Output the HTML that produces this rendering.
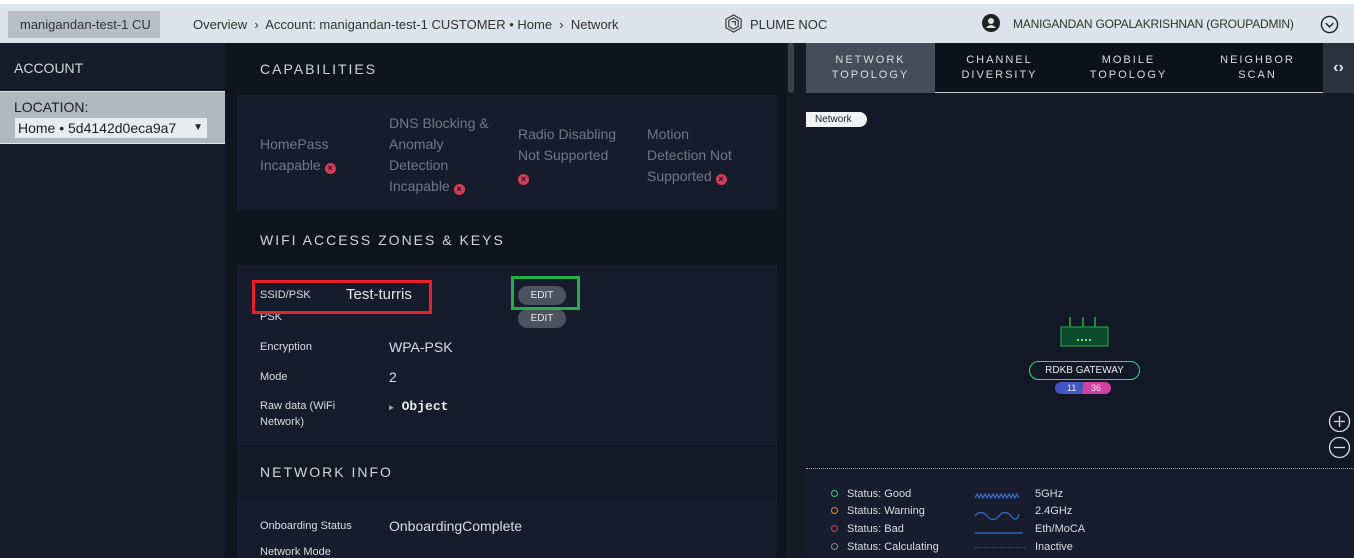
<!DOCTYPE html>
<html style="width:1354px;height:558px;overflow:hidden"><head><style>
*{margin:0;padding:0;box-sizing:border-box}
body{width:1354px;height:558px;overflow:hidden;background:#11151f;font-family:"Liberation Sans",sans-serif;position:relative;color:#c9ced6}
.a{position:absolute}
.top{left:0;top:0;width:1354px;height:43px;background:#dce3ea;border-top:4px solid #fff}
.t{font-size:13px;color:#333}
.side{left:0;top:43px;width:225px;height:515px;background:#171c2b}
.mid{left:225px;top:43px;width:561px;height:515px;background:#10141e}
.card{background:#161c2b}
.h{font-size:14px;letter-spacing:2px;color:#d0d4da}
.cap{font-size:14px;color:#6f7684;line-height:21px}
.x{display:inline-block;width:11px;height:11px;border-radius:50%;background:#d33b57;color:#161c2b;font-size:9px;line-height:11px;text-align:center;font-weight:bold;vertical-align:-1px}
.lb{font-size:11px;color:#d8dce2}
.v{font-size:14px;color:#d8dce2}
.btn{width:48px;height:19px;border-radius:10px;background:#4b535f;color:#e6e9ee;font-size:10px;text-align:center;line-height:19px}
.tab{top:43px;height:50px;font-size:11px;letter-spacing:2px;color:#d8dce2;text-align:center;line-height:15px;padding-top:10px}
.lg{font-size:11px;color:#d8dce2}
.dot{width:7px;height:7px;border-radius:50%;border:1.5px solid}
</style></head><body>
<div class="a top"></div>
<div class="a" style="left:8px;top:11px;width:152px;height:27px;background:#b8bec6;font-size:13px;color:#333;line-height:27px;padding-left:12px;overflow:hidden;white-space:nowrap">manigandan-test-1 CU</div>
<div class="a t" style="left:193px;top:17px">Overview &nbsp;›&nbsp; Account: manigandan-test-1 CUSTOMER • Home &nbsp;›&nbsp; Network</div>
<svg class="a" style="left:724px;top:14px" width="19" height="19" viewBox="0 0 20 20" fill="none" stroke="#444" stroke-width="1.3"><path d="M10 1 L18 5.5 L18 14.5 L10 19 L2 14.5 L2 5.5 Z"/><path d="M10 4 L15 7 L15 13 L10 16 L5 13 L5 7 Z"/><path d="M8 8 L12 8 L12 12"/></svg>
<div class="a t" style="left:750px;top:17px">PLUME NOC</div>
<svg class="a" style="left:982px;top:14px" width="18" height="18" viewBox="0 0 18 18"><circle cx="9" cy="9" r="9" fill="#222"/><circle cx="9" cy="7" r="3" fill="#dce3ea"/><path d="M4 14 Q9 8 14 14" fill="#dce3ea"/></svg>
<div class="a t" style="left:1013px;top:17px;font-size:12px;letter-spacing:-0.2px">MANIGANDAN GOPALAKRISHNAN (GROUPADMIN)</div>
<svg class="a" style="left:1320px;top:15px" width="19" height="19" viewBox="0 0 20 20" fill="none" stroke="#222" stroke-width="1.5"><circle cx="10" cy="10" r="8.5"/><path d="M6 8.5 L10 12.5 L14 8.5"/></svg>

<div class="a side"></div>
<div class="a" style="left:14px;top:60px;font-size:14px;color:#d0d4da">ACCOUNT</div>
<div class="a" style="left:0;top:91px;width:225px;height:53px;background:#b2b8c0;border-top:1px solid #e0e4e8;border-bottom:1px solid #e0e4e8"></div>
<div class="a" style="left:14px;top:99px;font-size:14px;color:#222">LOCATION:</div>
<div class="a" style="left:15px;top:118px;width:192px;height:20px;background:#e8ecf0;font-size:14px;color:#222;padding-left:3px;line-height:20px;white-space:nowrap;overflow:hidden">Home • 5d4142d0eca9a7<span style="position:absolute;right:4px;font-size:10px">▼</span></div>

<div class="a mid"></div>
<div class="a" style="left:786px;top:43px;width:20px;height:515px;background:#161a24"></div>
<div class="a" style="left:788px;top:43px;width:6px;height:50px;background:#3a3f49;border-radius:3px"></div>
<div class="a h" style="left:260px;top:61px">CAPABILITIES</div>
<div class="a card" style="left:237px;top:95px;width:540px;height:115px"></div>
<div class="a cap" style="left:260px;top:134px">HomePass<br>Incapable <span class="x">×</span></div>
<div class="a cap" style="left:389px;top:113px">DNS Blocking &amp;<br>Anomaly<br>Detection<br>Incapable <span class="x">×</span></div>
<div class="a cap" style="left:518px;top:124px">Radio Disabling<br>Not Supported<br><span class="x">×</span></div>
<div class="a cap" style="left:647px;top:124px">Motion<br>Detection Not<br>Supported <span class="x">×</span></div>
<div class="a h" style="left:260px;top:232px">WIFI ACCESS ZONES &amp; KEYS</div>
<div class="a card" style="left:237px;top:265px;width:540px;height:180px"></div>
<div class="a" style="left:237px;top:445px;width:540px;height:52px;background:#131825"></div>
<div class="a lb" style="left:260px;top:289px">SSID/PSK</div>
<div class="a" style="left:346px;top:286px;font-size:15px;color:#e0e3e8">Test-turris</div>
<div class="a lb" style="left:260px;top:311px">PSK</div>
<div class="a" style="left:252px;top:280px;width:180px;height:34px;border:3px solid #e8202a"></div>
<div class="a btn" style="left:518px;top:286px">EDIT</div>
<div class="a btn" style="left:518px;top:309px">EDIT</div>
<div class="a" style="left:511px;top:276px;width:69px;height:34px;border:3px solid #22b04a"></div>
<div class="a lb" style="left:260px;top:341px">Encryption</div>
<div class="a v" style="left:389px;top:339px">WPA-PSK</div>
<div class="a lb" style="left:260px;top:371px">Mode</div>
<div class="a v" style="left:389px;top:369px">2</div>
<div class="a lb" style="left:260px;top:398px;line-height:16px">Raw data (WiFi<br>Network)</div>
<div class="a" style="left:389px;top:399px;font-family:'Liberation Mono',monospace;font-size:13px;color:#e8eaee;font-weight:bold"><span style="font-size:8px;color:#aaa;font-weight:normal">►</span> Object</div>
<div class="a h" style="left:260px;top:464px">NETWORK INFO</div>
<div class="a card" style="left:237px;top:497px;width:540px;height:61px"></div>
<div class="a lb" style="left:260px;top:520px">Onboarding Status</div>
<div class="a v" style="left:389px;top:518px">OnboardingComplete</div>
<div class="a lb" style="left:260px;top:546px">Network Mode</div>

<div class="a" style="left:806px;top:43px;width:548px;height:425px;background:#131826"></div>
<div class="a" style="left:806px;top:43px;width:548px;height:50px;background:#0d111b;border-bottom:1px solid #c8ccd2"></div>
<div class="a tab" style="left:806px;width:129px;background:#454d5a">NETWORK<br>TOPOLOGY</div>
<div class="a tab" style="left:935px;width:129px">CHANNEL<br>DIVERSITY</div>
<div class="a tab" style="left:1064px;width:129px">MOBILE<br>TOPOLOGY</div>
<div class="a tab" style="left:1193px;width:129px">NEIGHBOR<br>SCAN</div>
<div class="a" style="left:1323px;top:43px;width:31px;height:50px;background:#2d333e;color:#e0e3e8;font-size:16px;line-height:50px;text-align:center;font-weight:bold">‹›</div>
<div class="a" style="left:806px;top:112px;width:61px;height:15px;background:#f2f3f5;border-radius:0 8px 8px 0;font-size:10px;color:#222;line-height:15px;padding-left:9px">Network</div>
<svg class="a" style="left:1058px;top:314px" width="52" height="34" viewBox="0 0 52 34"><g stroke="#22b04a" stroke-width="1.5"><line x1="12" y1="3" x2="12" y2="13"/><line x1="25" y1="3" x2="25" y2="13"/><line x1="37" y1="3" x2="37" y2="13"/></g><rect x="3" y="13" width="47" height="19" fill="#0a4a2a" stroke="#22b04a"/><g fill="#5cf08e"><rect x="19" y="25" width="2" height="2"/><rect x="23" y="25" width="2" height="2"/><rect x="27" y="25" width="2" height="2"/><rect x="31" y="25" width="2" height="2"/></g></svg>
<div class="a" style="left:1029px;top:361px;width:111px;height:19px;border:1px solid #3ad484;border-radius:10px;font-size:10px;color:#e8eaee;text-align:center;line-height:17px">RDKB GATEWAY</div>
<div class="a" style="left:1055px;top:382px;width:56px;height:12px;border-radius:6px;background:linear-gradient(100deg,#4355c0 50%,#d042a0 50%);font-size:9px;color:#e8eaee;line-height:12px"><span style="position:absolute;left:12px">11</span><span style="position:absolute;left:36px">36</span></div>
<svg class="a" style="left:1328px;top:410px" width="24" height="52" viewBox="0 0 24 52" fill="none" stroke="#d8dce2" stroke-width="1.3"><circle cx="11.5" cy="11.5" r="10"/><path d="M11.5 6v11M6 11.5h11"/><circle cx="11.5" cy="37.5" r="10"/><path d="M6 37.5h11"/></svg>
<div class="a" style="left:806px;top:468px;width:548px;height:90px;background:#171d2e;border-top:1px dotted #9aa0aa"></div>
<div class="a dot" style="left:831px;top:490px;border-color:#2ad07a"></div>
<div class="a dot" style="left:831px;top:507px;border-color:#e0901a"></div>
<div class="a dot" style="left:831px;top:525px;border-color:#d33b57"></div>
<div class="a dot" style="left:831px;top:543px;border-color:#888"></div>
<div class="a lg" style="left:847px;top:488px">Status: Good</div>
<div class="a lg" style="left:847px;top:505px">Status: Warning</div>
<div class="a lg" style="left:847px;top:523px">Status: Bad</div>
<div class="a lg" style="left:847px;top:541px">Status: Calculating</div>
<svg class="a" style="left:967px;top:488px" width="60" height="60" viewBox="0 0 60 60" fill="none" stroke="#3a6cc8" stroke-width="1.2"><path d="M8 10 l2-4 2 4 2-4 2 4 2-4 2 4 2-4 2 4 2-4 2 4 2-4 2 4 2-4 2 4 2-4 2 4 2-4 2 4 2-4 2 4 2-4 2 4"/><path d="M8 28 q6-7 12 0 t12 0 t12 0 t8-2"/><path d="M8 45 H56"/></svg>
<div class="a" style="left:975px;top:547px;width:50px;border-top:1px dotted #555"></div>
<div class="a lg" style="left:1035px;top:488px">5GHz</div>
<div class="a lg" style="left:1035px;top:505px">2.4GHz</div>
<div class="a lg" style="left:1035px;top:523px">Eth/MoCA</div>
<div class="a lg" style="left:1035px;top:541px">Inactive</div>
</body></html>
